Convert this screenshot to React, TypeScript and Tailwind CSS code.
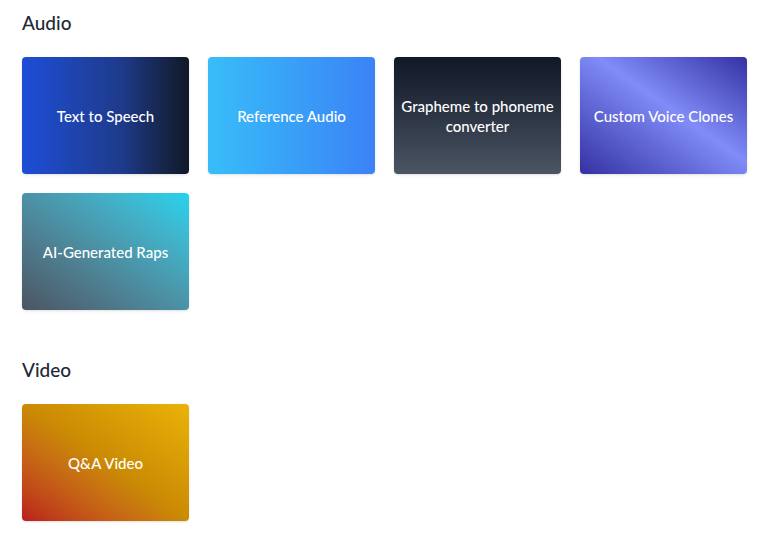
import React from "react";

type Card = { label: string; cls: string };

const audio: Card[] = [
  { label: "Text to Speech", cls: "bg-linear-to-r from-[#1d4ed8] via-[#1e3a8a] via-60% to-[#111827]" },
  { label: "Reference Audio", cls: "bg-linear-to-r from-[#38bdf8] to-[#3b82f6]" },
  { label: "Grapheme to phoneme converter", cls: "bg-linear-to-b from-[#111827] to-[#4b5563]" },
  { label: "Custom Voice Clones", cls: "bg-linear-to-tr from-[#3730a3] via-[#818cf8] via-55% to-[#3730a3]" },
  { label: "AI-Generated Raps", cls: "bg-linear-to-tr from-[#4b5563] to-[#22d3ee]" },
];

const video: Card[] = [
  { label: "Q&A Video", cls: "bg-linear-to-tr from-[#b91c1c] via-[#ca8a04] to-[#eab308]" },
];

function Tile({ c }: { c: Card }) {
  return (
    <div
      className={`${c.cls} w-[167px] h-[117px] rounded-[4px] flex items-center justify-center px-1 text-center text-white text-[15px] leading-5 font-medium shadow-sm`}
    >
      {c.label}
    </div>
  );
}

function Section({ title, cards, className }: { title: string; cards: Card[]; className?: string }) {
  return (
    <section className={className}>
      <h2 className="text-[19px] leading-7 font-medium text-[#1f2937]">{title}</h2>
      <div className="mt-[20px] grid grid-cols-[repeat(4,167px)] gap-[19px]">
        {cards.map((c) => (
          <Tile key={c.label} c={c} />
        ))}
      </div>
    </section>
  );
}

export default function App() {
  return (
    <div
      className="bg-white min-h-[533px] px-[22px] pt-[9px]"
      style={{ fontFamily: "Lato, 'Noto Sans', sans-serif" }}
    >
      <Section title="Audio" cards={audio} />
      <Section title="Video" cards={video} className="mt-[46px]" />
    </div>
  );
}
